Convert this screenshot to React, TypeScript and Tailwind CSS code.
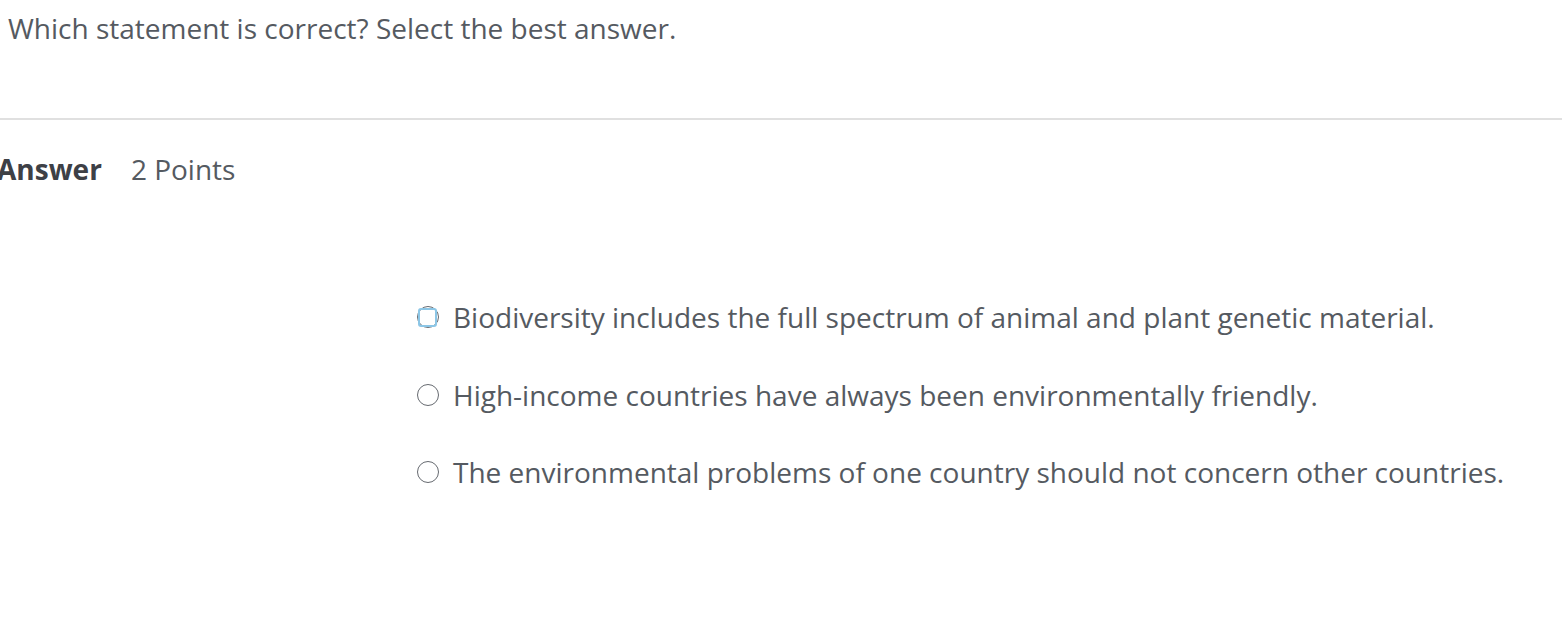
const options = [
	'Biodiversity includes the full spectrum of animal and plant genetic material.',
	'High-income countries have always been environmentally friendly.',
	'The environmental problems of one country should not concern other countries.',
];

function Radio({ focused }: { focused?: boolean }) {
	return (
		<span className="relative flex h-[23px] w-[23px] shrink-0 items-center justify-center">
			<span className="h-[22px] w-[22px] rounded-full border-[1.5px] border-[#666a70] bg-white" />
			{focused && (
				<span className="absolute left-[2px] top-[2px] h-[19px] w-[19px] rounded-[3px] border-2 border-[#8cc6e6]" />
			)}
		</span>
	);
}

export default function App() {
	return (
		<div className="h-[620px] w-[1562px] overflow-hidden bg-white font-['Open_Sans',sans-serif]">
			<div className="px-[8px] pt-[8px] text-[28px] leading-[40px] text-[#555a61]">
				Which statement is correct? Select the best answer.
			</div>
			<div className="mt-[70px] h-[2px] w-full bg-[#e0e0e0]" />
			<div className="ml-[-3px] mt-[29px] flex items-baseline gap-[29px] text-[28px] leading-[40px]">
				<span className="font-bold text-[#3d4046]">Answer</span>
				<span className="text-[#555a61]">2 Points</span>
			</div>
			<div className="ml-[416px] mt-[108px] flex flex-col gap-[37.5px]">
				{options.map((text, i) => (
					<label key={i} className="flex items-center gap-[14px] text-[28px] leading-[40px] text-[#555a61]">
						<Radio focused={i === 0} />
						<span>{text}</span>
					</label>
				))}
			</div>
		</div>
	);
}
